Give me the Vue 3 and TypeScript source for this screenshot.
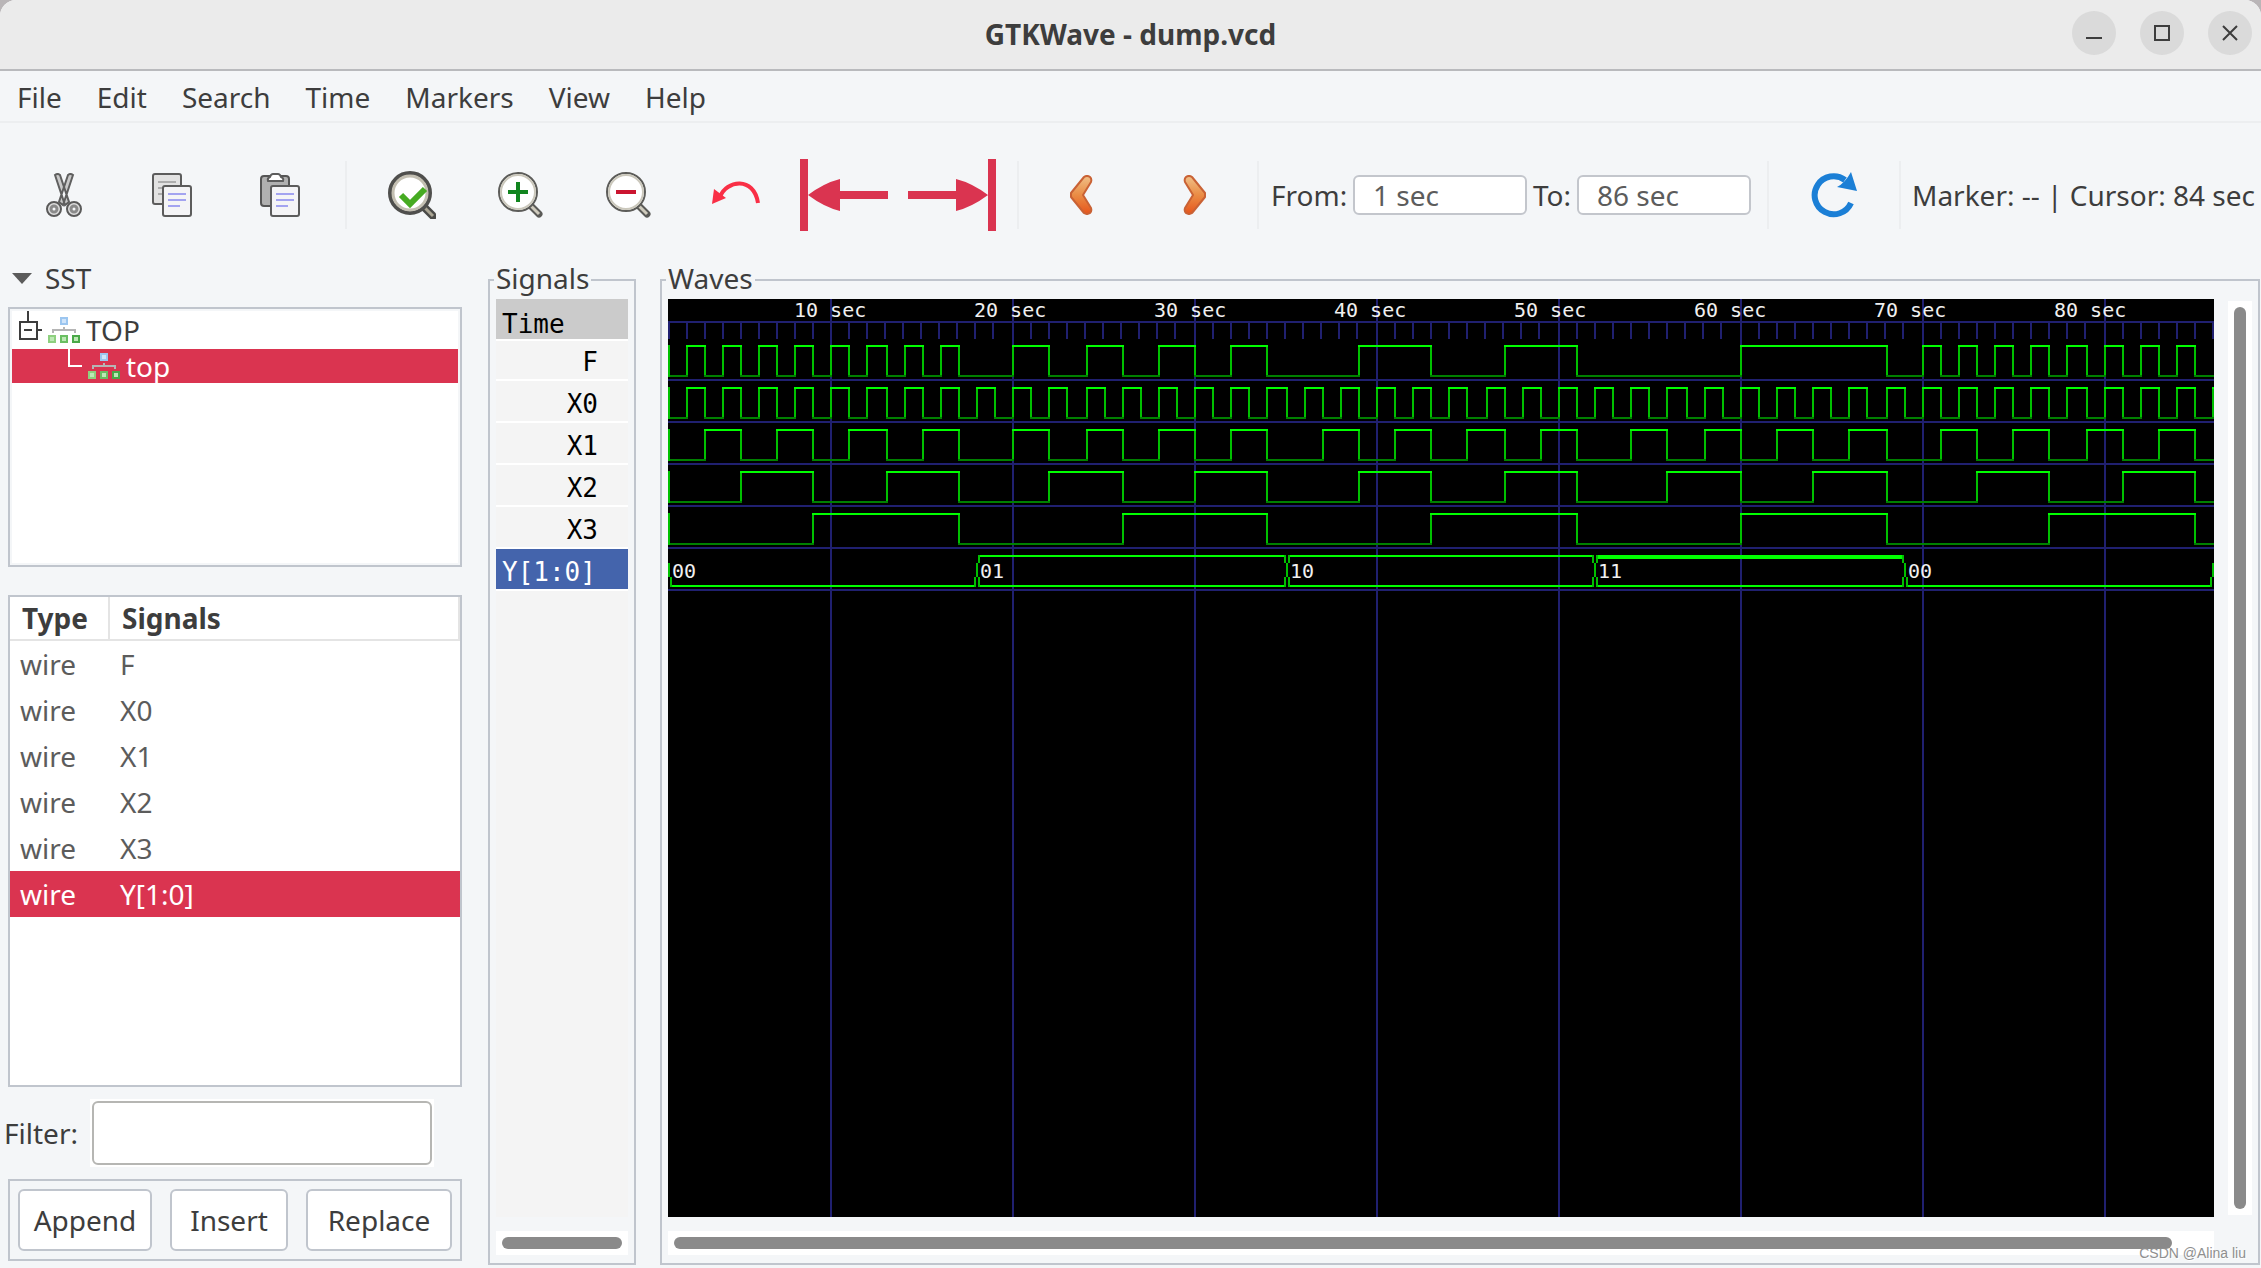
<script setup lang="ts">
import { ref } from 'vue'

interface Signal {
  name: string
  rises: number[]
  falls: number[]
}

interface Rect {
  x: number
  y: number
  w: number
  h: number
  c: string
}

const menus = ['File', 'Edit', 'Search', 'Time', 'Markers', 'View', 'Help']
const wires = ['F', 'X0', 'X1', 'X2', 'X3', 'Y[1:0]']
const selectedWire = ref('Y[1:0]')
const from = ref('1 sec')
const to = ref('86 sec')
const filter = ref('')

const START = 1
const END = 86
const UNIT = 9.09
const ROW = 42

const GRID = '#202070'
const HIGH = '#00ff00'
const EDGE = '#00c000'
const LOW = '#008000'

// Time to canvas position, snapped to the 2px drawing grid.
const xOf = (t: number): number => 2 * Math.floor((t - START) * UNIT)

// The stimulus runs in blocks of 17 seconds.
const blocks = [1, 18, 35, 52, 69]

function range(first: number, last: number, step: number): number[] {
  const out: number[] = []
  for (let t = first; t <= last; t += step) out.push(t)
  return out
}

const divided = (half: number) => ({
  rises: blocks.flatMap((b) => range(b + half, b + 16 - half, half * 2)),
  falls: blocks.flatMap((b) => range(b + half * 2, b + 16, half * 2)),
})

const signals: Signal[] = [
  {
    name: 'F',
    rises: [...range(2, 16, 2), 20, 24, 28, 32, 39, 47, 60, ...range(70, 84, 2)],
    falls: [...range(3, 17, 2), 22, 26, 30, 34, 43, 51, 68, ...range(71, 85, 2)],
  },
  { name: 'X0', rises: range(2, 86, 2), falls: range(3, 85, 2) },
  { name: 'X1', ...divided(2) },
  { name: 'X2', ...divided(4) },
  { name: 'X3', ...divided(8) },
]

const bus = [
  { t: 1, value: '00' },
  { t: 18, value: '01' },
  { t: 35, value: '10' },
  { t: 52, value: '11' },
  { t: 69, value: '00' },
]

const decades = [10, 20, 30, 40, 50, 60, 70, 80]
const timeLabels = decades.map((t, i) => ({ text: `${t} sec`, x: 126 + i * 180 }))

function ticks(): number[] {
  const out = range(0, 8, 1).map((i) => i * 18)
  for (const d of decades) {
    for (let i = 1; i < 10; i++) {
      if (xOf(d) + i * 18 <= xOf(END)) out.push(xOf(d) + i * 18)
    }
  }
  return out
}

function signalRects(s: Signal, row: number): Rect[] {
  const y = 46 + row * ROW
  const out: Rect[] = []
  const edges = [...s.rises.map((t) => ({ t, up: true })), ...s.falls.map((t) => ({ t, up: false }))]
  edges.sort((a, b) => a.t - b.t)
  let x = 0
  let up = false
  const level = (end: number) => {
    out.push({ x, y: up ? y : y + 30, w: end - x + 2, h: 2, c: up ? HIGH : LOW })
  }
  for (const e of edges) {
    level(xOf(e.t))
    x = xOf(e.t)
    up = e.up
  }
  level(xOf(END))
  for (const t of [START, ...edges.map((e) => e.t)]) {
    out.push({ x: xOf(t), y: y + (t === START ? 0 : 2), w: 2, h: t === START ? 32 : 28, c: EDGE })
  }
  return out
}

function busRects(): Rect[] {
  const out: Rect[] = []
  const top = 256
  bus.forEach((b, i) => {
    const x = xOf(b.t)
    const end = xOf(bus[i + 1]?.t ?? END)
    out.push({ x: x + 2, y: top + 30, w: end - x - 2, h: 2, c: HIGH })
    if (b.value !== '00') out.push({ x: x + 2, y: top, w: end - x - 2, h: b.value === '11' ? 4 : 2, c: HIGH })
  })
  for (const t of [...bus.map((b) => b.t), END]) {
    const x = xOf(t)
    out.push({ x, y: top + 8, w: 2, h: 14, c: EDGE })
    const before = bus.find((b, i) => (bus[i + 1]?.t ?? END) === t)
    const after = bus.find((b) => b.t === t)
    if (before) {
      out.push({ x: x - 2, y: top + 22, w: 2, h: 10, c: EDGE })
      if (before.value !== '00') out.push({ x: x - 2, y: top, w: 2, h: 8, c: EDGE })
    }
    if (after) {
      out.push({ x: x + 2, y: top + 22, w: 2, h: 10, c: EDGE })
      if (after.value !== '00') out.push({ x: x + 2, y: top, w: 2, h: 8, c: EDGE })
    }
  }
  return out
}

const minorTicks = ticks()
const traces: Rect[] = [...signals.flatMap(signalRects), ...busRects()]
</script>

<template>
  <div class="window">
    <header class="titlebar">
      <h1>GTKWave - dump.vcd</h1>
      <div class="controls">
        <button aria-label="Minimize">
          <svg width="16" height="16"><path d="M0 13h16" stroke="#3d3d3d" stroke-width="2" /></svg>
        </button>
        <button aria-label="Maximize">
          <svg width="16" height="16"><path d="M1 1h14v14h-14z" fill="none" stroke="#3d3d3d" stroke-width="2" /></svg>
        </button>
        <button aria-label="Close">
          <svg width="16" height="16"><path d="M1 1l14 14M15 1l-14 14" stroke="#3d3d3d" stroke-width="2" /></svg>
        </button>
      </div>
    </header>

    <nav class="menubar">
      <button v-for="m in menus" :key="m">{{ m }}</button>
    </nav>

    <div class="toolbar">
      <button class="tool" aria-label="Cut">
        <svg width="44" height="44" viewBox="0 0 44 44">
          <path d="M13 2q3-2 5 0l9 27-4 3zM31 2q-3-2-5 0l-9 27 4 3z" fill="#c9c9c9" stroke="#5f5f5f" stroke-width="2" />
          <g fill="#dedede" stroke="#5a5a5a" stroke-width="2">
            <ellipse cx="12" cy="36" rx="7" ry="7" />
            <ellipse cx="32" cy="36" rx="7" ry="7" />
          </g>
          <g fill="#f4f6f8" stroke="#8a8a8a" stroke-width="3">
            <circle cx="12" cy="36" r="3" />
            <circle cx="32" cy="36" r="3" />
          </g>
        </svg>
      </button>
      <button class="tool" aria-label="Copy">
        <svg width="44" height="44" viewBox="0 0 44 44">
          <rect x="3" y="1" width="28" height="30" rx="2" fill="#e2e2e2" stroke="#5c5c5c" stroke-width="2" />
          <path d="M8 9h18M8 15h8M8 21h4" stroke="#adadad" stroke-width="2" />
          <rect x="13" y="13" width="28" height="30" rx="2" fill="#f4f4f6" stroke="#5c5c5c" stroke-width="2" />
          <path d="M18 21h18M18 27h18M18 33h12" stroke="#a3a3f0" stroke-width="2" />
        </svg>
      </button>
      <button class="tool" aria-label="Paste">
        <svg width="44" height="44" viewBox="0 0 44 44">
          <rect x="3" y="3" width="28" height="30" rx="3" fill="#b0b0b0" stroke="#555" stroke-width="2" />
          <path d="M10 8q-1-3 2-4 1-3 3-3h5q2 0 3 3 3 1 2 4z" fill="#fff" stroke="#5c5c5c" stroke-width="2" />
          <rect x="13" y="13" width="28" height="30" rx="2" fill="#f4f4f6" stroke="#5c5c5c" stroke-width="2" />
          <path d="M18 21h18M18 27h18M18 33h12" stroke="#a3a3f0" stroke-width="2" />
        </svg>
      </button>
      <span class="sep"></span>
      <button class="tool" aria-label="Zoom Fit">
        <svg width="48" height="48" viewBox="0 0 48 48">
          <path d="M36 36l9 9" stroke="#4a4a48" stroke-width="8" stroke-linecap="round" />
          <path d="M36 36l9 9" stroke="#aaa594" stroke-width="3" />
          <circle cx="22" cy="22" r="20" fill="#fff" stroke="#4f4f4d" stroke-width="4" />
          <circle cx="22" cy="22" r="17" fill="none" stroke="#c3bfb2" stroke-width="3" />
          <path d="M13 24l9 9 15-15" fill="none" stroke="#46ab22" stroke-width="6" />
        </svg>
      </button>
      <button class="tool" aria-label="Zoom In">
        <svg width="46" height="46" viewBox="0 0 46 46">
          <path d="M33 33l9 9" stroke="#5a5a57" stroke-width="7" stroke-linecap="round" />
          <path d="M32 32l10 10" stroke="#cfcbbd" stroke-width="3" />
          <circle cx="21" cy="20" r="19" fill="#fff" stroke="#5c5c59" stroke-width="2" />
          <circle cx="21" cy="20" r="17" fill="none" stroke="#cbc8bc" stroke-width="2" />
          <path d="M11 20h20M21 10v20" stroke="#11851f" stroke-width="4" />
        </svg>
      </button>
      <button class="tool" aria-label="Zoom Out">
        <svg width="46" height="46" viewBox="0 0 46 46">
          <path d="M33 33l9 9" stroke="#5a5a57" stroke-width="7" stroke-linecap="round" />
          <path d="M32 32l10 10" stroke="#cfcbbd" stroke-width="3" />
          <circle cx="21" cy="20" r="19" fill="#fff" stroke="#5c5c59" stroke-width="2" />
          <circle cx="21" cy="20" r="17" fill="none" stroke="#cbc8bc" stroke-width="2" />
          <path d="M11 20h20" stroke="#cb1530" stroke-width="4" />
        </svg>
      </button>
      <button class="tool" aria-label="Zoom Undo">
        <svg width="48" height="28" viewBox="0 0 48 28">
          <path d="M8 16C14-1 42-5 46 22" fill="none" stroke="#f92f46" stroke-width="4" />
          <path d="M2 8l12 9L0 23z" fill="#f92f46" />
        </svg>
      </button>
      <button class="tool" aria-label="Zoom to Start">
        <svg width="88" height="72" viewBox="0 0 88 72" fill="#da3450">
          <path d="M0 0h8v72h-8zM40 32h48v8h-48zM8 36Q24 24 40 20V52Q24 48 8 36z" />
        </svg>
      </button>
      <button class="tool" aria-label="Zoom to End">
        <svg width="88" height="72" viewBox="0 0 88 72" fill="#da3450">
          <path d="M80 0h8v72h-8zM0 32h48v8h-48zM80 36Q64 24 48 20V52Q64 48 80 36z" />
        </svg>
      </button>
      <span class="sep"></span>
      <button class="tool" aria-label="Previous Edge">
        <svg width="28" height="40" viewBox="0 0 28 40">
          <defs>
            <linearGradient id="amber" x1="0" y1="0" x2="0" y2="1">
              <stop offset="0" stop-color="#f0c088" />
              <stop offset="0.5" stop-color="#ea8c45" />
              <stop offset="1" stop-color="#e6551c" />
            </linearGradient>
          </defs>
          <path d="M14 2q3-2 6 0 2 2 1 5L13 20l8 13q1 3-1 5-3 2-6 0L1 22v-4z" fill="url(#amber)" stroke="#c96235" stroke-width="2" stroke-linejoin="round" />
        </svg>
      </button>
      <button class="tool" aria-label="Next Edge">
        <svg width="28" height="40" viewBox="0 0 28 40">
          <path d="M14 2q-3-2-6 0-2 2-1 5l8 13L7 33q-1 3 1 5 3 2 6 0l13-16v-4z" fill="url(#amber)" stroke="#c96235" stroke-width="2" stroke-linejoin="round" />
        </svg>
      </button>
      <span class="sep"></span>
      <label class="range from">From:<input v-model="from" type="text" /></label>
      <label class="range to">To:<input v-model="to" type="text" /></label>
      <span class="sep"></span>
      <button class="tool" aria-label="Reload">
        <svg width="46" height="46" viewBox="0 0 46 46">
          <path d="M34 8A19 19 0 1 0 40 31" fill="none" stroke="#1b7fd6" stroke-width="6" />
          <path d="M40 0l6 19-20-4q8-4 14-15z" fill="#1b7fd6" />
        </svg>
      </button>
      <span class="sep"></span>
      <output class="status">Marker: -- | Cursor: 84 sec</output>
    </div>

    <main class="main">
      <section class="side">
        <h2 class="sst">
          <svg width="20" height="11"><path d="M0 0h20L10 11z" fill="#5b5b5b" /></svg>SST
        </h2>
        <ul class="tree">
          <li class="node root">
            <svg width="29" height="38" fill="none" stroke="#3d3d3d" stroke-width="2">
              <path d="M9 0v10M5 19h8M17 19h6M1 11h17v17h-17z" />
            </svg>
            <svg class="hier" width="32" height="26">
              <use href="#hier-icon" />
            </svg>
            TOP
          </li>
          <li class="node child">
            <svg width="20" height="34" fill="none" stroke="#fff" stroke-width="2"><path d="M1 0v17h13" /></svg>
            <svg class="hier" width="32" height="26">
              <defs>
                <g id="hier-icon">
                  <path d="M5 16v-3h11v-3M16 13h11v3" fill="none" stroke="#b5b5b5" stroke-width="2" />
                  <rect x="12" y="0" width="8" height="8" fill="#9cc6f0" />
                  <rect x="14" y="2" width="4" height="4" fill="#cfe4fa" />
                  <rect x="0" y="18" width="8" height="8" fill="#8ed07f" />
                  <rect x="12" y="18" width="8" height="8" fill="#6abf62" />
                  <rect x="24" y="18" width="8" height="8" fill="#4aa948" />
                  <path d="M2 20h4v4h-4zM14 20h4v4h-4zM26 20h4v4h-4z" fill="#bde8b5" />
                </g>
              </defs>
              <use href="#hier-icon" />
            </svg>
            top
          </li>
        </ul>

        <div class="list">
          <table>
            <thead>
              <tr><th class="type">Type</th><th>Signals</th></tr>
            </thead>
            <tbody>
              <tr v-for="w in wires" :key="w" :class="{ selected: w === selectedWire }" @click="selectedWire = w">
                <td>wire</td>
                <td>{{ w }}</td>
              </tr>
            </tbody>
          </table>
        </div>

        <div class="filter">
          <label for="filter">Filter:</label>
          <span class="field"><input id="filter" v-model="filter" type="text" /></span>
        </div>

        <div class="actions">
          <button class="append">Append</button>
          <button class="insert">Insert</button>
          <button class="replace">Replace</button>
        </div>
      </section>

      <fieldset class="frame">
        <legend>Signals</legend>
        <div class="names">
          <div class="name time">Time</div>
          <div v-for="s in signals" :key="s.name" class="name">{{ s.name }}</div>
          <div class="name picked">Y[1:0]</div>
        </div>
        <div class="hscroll"><div class="thumb"></div></div>
      </fieldset>

      <fieldset class="frame waves">
        <legend>Waves</legend>
        <div class="view">
          <svg class="canvas" shape-rendering="crispEdges">
            <rect v-for="d in decades" :key="d" :x="xOf(d)" y="0" width="2" height="100%" :fill="GRID" />
            <rect x="0" y="22" width="100%" height="2" :fill="GRID" />
            <rect v-for="x in minorTicks" :key="x" :x="x" y="22" width="2" height="18" :fill="GRID" />
            <rect v-for="r in 6" :key="r" x="0" :y="38 + r * ROW" width="100%" height="2" :fill="GRID" />
            <rect v-for="(r, i) in traces" :key="i" :x="r.x" :y="r.y" :width="r.w" :height="r.h" :fill="r.c" />
            <text v-for="l in timeLabels" :key="l.text" :x="l.x" y="18">{{ l.text }}</text>
            <text v-for="b in bus" :key="b.t" :x="xOf(b.t) + 4" y="279">{{ b.value }}</text>
          </svg>
          <div class="vscroll"><div class="thumb"></div></div>
        </div>
        <div class="hscroll"><div class="thumb"></div></div>
      </fieldset>
    </main>

    <div class="credit">CSDN @Alina liu</div>
  </div>
</template>

<style>
body {
  margin: 0;
  background: #b9b5b7;
}
</style>

<style scoped>
* {
  box-sizing: border-box;
}

.window {
  position: relative;
  display: flex;
  flex-direction: column;
  min-height: 100vh;
  overflow: hidden;
  border-radius: 16px 16px 0 0;
  background: #f4f6f8;
  color: #3d3d3d;
  font: 28px/32px "Noto Sans", "Open Sans", sans-serif;
}

button,
input {
  font: inherit;
  color: inherit;
}

button {
  padding: 0;
  border: 0;
  background: none;
}

svg {
  display: block;
  flex: none;
}

.titlebar {
  display: grid;
  grid-template-columns: 1fr auto 1fr;
  align-items: center;
  height: 71px;
  padding: 0 9px 4px 9px;
  border-bottom: 2px solid #b9babd;
  background: #ebebeb;
}

.titlebar h1 {
  grid-column: 2;
  margin: 0;
  padding-top: 2px;
  font-size: 28px;
  font-weight: 700;
}

.controls {
  display: flex;
  justify-content: flex-end;
  gap: 24px;
}

.controls button {
  display: grid;
  place-items: center;
  width: 44px;
  height: 44px;
  border-radius: 50%;
  background: #dadada;
}

.menubar {
  display: flex;
  gap: 35px;
  height: 52px;
  padding: 2px 17px 0;
  border-bottom: 2px solid #eceef0;
}

.toolbar {
  display: flex;
  align-items: center;
  height: 144px;
  padding-left: 10px;
}

.tool {
  display: flex;
  flex: none;
  align-items: center;
  justify-content: center;
  width: 108px;
  height: 72px;
}

.sep {
  flex: none;
  width: 2px;
  height: 68px;
  margin: 0 11px;
  background: #eceef0;
}

.range {
  display: flex;
  align-items: center;
  justify-content: space-between;
}

.from {
  width: 257px;
  padding-left: 1px;
}

.to {
  width: 224px;
  margin-right: 5px;
  padding-left: 6px;
}

.range input {
  width: 174px;
  height: 40px;
  padding: 0 18px;
  border: 2px solid #c3c6cc;
  border-radius: 6px;
  background: #fff;
  color: #5c5c5c;
}

.status {
  white-space: nowrap;
}

.main {
  display: grid;
  flex: 1;
  grid-template-columns: 464px 148px 1fr;
  column-gap: 24px;
  padding-right: 1px;
}

.side {
  display: flex;
  flex-direction: column;
  padding: 0 2px 7px 0;
}

.sst {
  display: flex;
  gap: 13px;
  align-items: center;
  height: 40px;
  margin: 0;
  padding: 0 0 18px 12px;
  font: inherit;
}

.tree {
  height: 260px;
  margin: 0 0 28px 8px;
  padding: 0;
  border: 2px solid #c0c5cd;
  outline: 2px solid #f4f6f8;
  outline-offset: -4px;
  background: #fff;
  list-style: none;
}

.node {
  display: flex;
  align-items: center;
  margin: 0 2px;
}

.root {
  height: 38px;
  margin-top: 2px;
  padding-left: 7px;
}

.child {
  height: 34px;
  padding-left: 56px;
  background: #da3450;
  color: #fff;
}

.hier {
  margin-right: 6px;
}

.list {
  flex: 1;
  margin: 0 0 12px 8px;
  border: 2px solid #c0c5cd;
  background: #fff;
}

table {
  width: 100%;
  border-spacing: 0;
  table-layout: fixed;
}

th,
td {
  height: 46px;
  padding: 0 0 0 10px;
  text-align: left;
}

th {
  height: 44px;
  padding-left: 12px;
  border-right: 2px solid #e4e4e4;
  border-bottom: 2px solid #e4e4e4;
  font-weight: 700;
}

th.type {
  width: 100px;
}

td {
  color: #5c5c5c;
}

.selected td {
  background: #da3450;
  color: #fff;
}

.filter {
  display: flex;
  align-items: center;
  justify-content: space-between;
  margin: 0 28px 12px 4px;
}

.field {
  width: 344px;
  height: 68px;
  padding: 2px;
  background: #fff;
}

.field input {
  width: 100%;
  height: 100%;
  padding: 0 16px;
  border: 2px solid #b6b6b3;
  border-radius: 6px;
  background: #fff;
}

.actions {
  display: flex;
  justify-content: space-between;
  height: 82px;
  margin-left: 8px;
  padding: 8px;
  border: 2px solid #c0c5cd;
}

.actions button {
  border: 2px solid #c0c5cd;
  border-radius: 6px;
  background: #fff;
}

.append {
  width: 134px;
}

.insert {
  width: 118px;
}

.replace {
  width: 146px;
}

.frame {
  display: flex;
  flex-direction: column;
  min-width: 0;
  margin: 0 0 3px;
  padding: 6px 6px 8px;
  border: 2px solid #c0c5cd;
}

legend {
  margin-left: -2px;
  padding: 0 2px 4px;
  line-height: 22px;
}

.names {
  flex: 1;
  background: #f4f4f4;
  color: #000;
  font: 26px/30px "DejaVu Sans Mono", monospace;
}

.name {
  display: flex;
  align-items: flex-end;
  justify-content: flex-end;
  height: 42px;
  padding: 0 30px 2px 6px;
  border-bottom: 2px solid #fff;
}

.name.time,
.name.picked {
  justify-content: flex-start;
  padding-right: 0;
}

.name.time {
  padding-bottom: 0;
  background: #cbcbcb;
}

.name.time + .name {
  height: 40px;
}

.name.picked {
  background: #4464ac;
  color: #fff;
}

.view {
  display: flex;
  flex: 1;
  gap: 14px;
}

.canvas {
  flex: 1;
  min-width: 0;
  height: auto;
  background: #000;
}

.canvas text {
  fill: #f0f0f0;
  font: 20px "DejaVu Sans Mono", monospace;
}

.hscroll {
  height: 24px;
  margin-top: 14px;
  padding: 6px;
  background: #fff;
}

.vscroll {
  width: 24px;
  margin: 2px 0;
  padding: 6px;
  background: #fff;
}

.thumb {
  height: 100%;
  border-radius: 6px;
  background: #8a8a8a;
}

.waves .hscroll {
  margin-right: 38px;
  padding-right: 42px;
}

.credit {
  position: absolute;
  right: 15px;
  bottom: 6px;
  color: #8f8f8f;
  font: 14px/18px "Liberation Sans", sans-serif;
  text-shadow: 1px 1px 0 #fff;
}
</style>
